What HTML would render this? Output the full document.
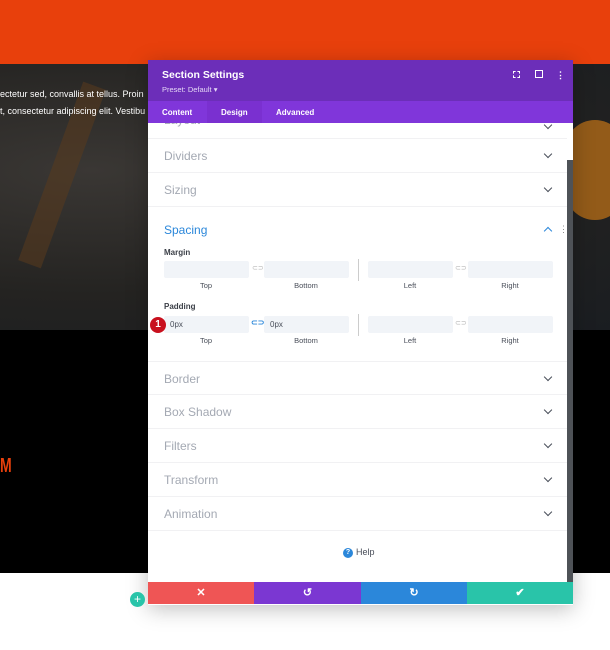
<!DOCTYPE html>
<html><head><style>
*{margin:0;padding:0;box-sizing:border-box}
body{width:610px;height:650px;overflow:hidden;position:relative;font-family:"Liberation Sans",sans-serif;background:#fff}
.abs{position:absolute}
.row{position:absolute;left:148px;width:419px;border-bottom:1px solid #f1f1f3}
.row span{position:absolute;left:16px;font-size:12px;color:#a4a9b3}
.chev{position:absolute;right:16px;width:6px;height:6px;border-right:1.6px solid #4a4f5a;border-bottom:1.6px solid #4a4f5a;transform:rotate(45deg)}
.inp{position:absolute;height:17px;background:#f1f4f8;border-radius:2px;font-size:8px;color:#4a4f5a;padding:4px 6px}
.lbl{position:absolute;font-size:7.5px;color:#4a4f5a;text-align:center;width:84px}
.sm{position:absolute;font-size:8px;color:#3b3f47;font-weight:bold}
.btn{position:absolute;top:582px;height:22px;color:#fff;font-size:11px;text-align:center;line-height:22px;font-weight:bold}
.top{z-index:5}
</style></head><body>
<div class="abs" style="left:0;top:0;width:610px;height:64px;background:#e8400c"></div>
<div class="abs" style="left:0;top:64px;width:610px;height:266px;background:radial-gradient(ellipse at 15% 40%,#3a3734,#242321 55%,#1a1d21);"></div>
<div class="abs" style="left:50px;top:80px;width:24px;height:190px;background:#5a3a1e;transform:rotate(20deg);opacity:.55"></div>
<div class="abs" style="left:565px;top:120px;width:60px;height:100px;background:#b06a18;border-radius:30px;opacity:.8"></div>
<div class="abs" style="left:0;top:330px;width:610px;height:243px;background:#000"></div>
<div class="abs" style="left:0;top:89px;font-size:9px;color:#fff">ectetur sed, convallis at tellus. Proin</div>
<div class="abs" style="left:0;top:106px;font-size:9px;color:#fff">t, consectetur adipiscing elit. Vestibu</div>
<div class="abs" style="left:0;top:455px;font-size:20px;color:#e8400c;font-weight:bold;transform:scaleX(.7);transform-origin:left">M</div>
<div class="abs" style="left:148px;top:60px;width:425px;height:545px;background:#fff;box-shadow:0 4px 20px rgba(0,0,0,.25)"></div>
<div class="abs top" style="left:148px;top:60px;width:425px;height:41px;background:#6c2eb9"></div>
<div class="abs top" style="left:162px;top:69px;font-size:10.5px;color:#fff;font-weight:bold">Section Settings</div>
<div class="abs top" style="left:162px;top:85px;font-size:7.5px;color:#e5d8f6">Preset: Default ▾</div>
<div class="abs top" style="left:513px;top:71px;width:7px;height:7px;border:1px dashed #fff"></div>
<div class="abs top" style="left:535px;top:70px;width:8px;height:8px;border:1.5px solid #fff"></div>
<div class="abs top" style="left:556px;top:70px;font-size:9px;color:#fff;font-weight:bold">⋮</div>
<div class="abs top" style="left:148px;top:101px;width:425px;height:22px;background:#8036da"></div>
<div class="abs top" style="left:207px;top:101px;width:55px;height:22px;background:#7a30d0"></div>
<div class="abs top" style="left:162px;top:108px;font-size:8px;color:#fff;font-weight:bold">Content</div>
<div class="abs top" style="left:221px;top:108px;font-size:8px;color:#fff;font-weight:bold">Design</div>
<div class="abs top" style="left:276px;top:108px;font-size:8px;color:#fff;font-weight:bold">Advanced</div>
<div class="abs" style="left:567px;top:160px;width:6px;height:422px;background:#4e5257"></div>
<div class="row" style="top:123px;height:16px"><span style="top:-10px">Layout</span><i class="chev" style="top:-1px"></i></div>
<div class="row" style="top:139px;height:34px"><span style="top:10px">Dividers</span><i class="chev" style="top:12px"></i></div>
<div class="row" style="top:173px;height:34px"><span style="top:10px">Sizing</span><i class="chev" style="top:12px"></i></div>
<div class="abs" style="left:164px;top:223px;font-size:12px;color:#2b87da">Spacing</div>
<div class="abs" style="left:545px;top:228px;width:6px;height:6px;border-left:1.6px solid #2b87da;border-top:1.6px solid #2b87da;transform:rotate(45deg)"></div>
<div class="abs" style="left:559px;top:224px;font-size:9px;color:#888">⋮</div>
<div class="sm" style="left:164px;top:248px">Margin</div>
<div class="inp" style="left:164px;top:261px;width:85px"></div>
<div class="inp" style="left:264px;top:261px;width:85px"></div>
<div class="inp" style="left:368px;top:261px;width:85px"></div>
<div class="inp" style="left:468px;top:261px;width:85px"></div>
<div class="abs" style="left:252px;top:264px;font-size:7px;color:#bbb">⊂⊃</div>
<div class="abs" style="left:455px;top:264px;font-size:7px;color:#bbb">⊂⊃</div>
<div class="abs" style="left:358px;top:259px;width:1px;height:22px;background:#ccc"></div>
<div class="lbl" style="left:164px;top:281px">Top</div><div class="lbl" style="left:264px;top:281px">Bottom</div>
<div class="lbl" style="left:368px;top:281px">Left</div><div class="lbl" style="left:468px;top:281px">Right</div>
<div class="sm" style="left:164px;top:302px">Padding</div>
<div class="inp" style="left:164px;top:316px;width:85px">0px</div>
<div class="inp" style="left:264px;top:316px;width:85px">0px</div>
<div class="inp" style="left:368px;top:316px;width:85px"></div>
<div class="inp" style="left:468px;top:316px;width:85px"></div>
<div class="abs" style="left:251px;top:318px;font-size:8px;color:#2b87da;font-weight:bold">⊂⊃</div>
<div class="abs" style="left:455px;top:319px;font-size:7px;color:#bbb">⊂⊃</div>
<div class="abs" style="left:358px;top:314px;width:1px;height:22px;background:#ccc"></div>
<div class="abs" style="left:150px;top:317px;width:16px;height:16px;border-radius:50%;background:#c8101e;color:#fff;font-size:10px;font-weight:bold;text-align:center;line-height:16px">1</div>
<div class="lbl" style="left:164px;top:336px">Top</div><div class="lbl" style="left:264px;top:336px">Bottom</div>
<div class="lbl" style="left:368px;top:336px">Left</div><div class="lbl" style="left:468px;top:336px">Right</div>
<div class="row" style="top:361px;height:34px;border-top:1px solid #f1f1f3"><span style="top:10px">Border</span><i class="chev" style="top:12px"></i></div>
<div class="row" style="top:395px;height:34px"><span style="top:10px">Box Shadow</span><i class="chev" style="top:12px"></i></div>
<div class="row" style="top:429px;height:34px"><span style="top:10px">Filters</span><i class="chev" style="top:12px"></i></div>
<div class="row" style="top:463px;height:34px"><span style="top:10px">Transform</span><i class="chev" style="top:12px"></i></div>
<div class="row" style="top:497px;height:34px"><span style="top:10px">Animation</span><i class="chev" style="top:12px"></i></div>
<div class="abs" style="left:343px;top:548px;width:10px;height:10px;border-radius:50%;background:#2b87da;color:#fff;font-size:7px;text-align:center;line-height:10px;font-weight:bold">?</div>
<div class="abs" style="left:356px;top:547px;font-size:9px;color:#4a4f5a">Help</div>
<div class="btn" style="left:148px;width:106px;background:#ef5555">✕</div>
<div class="btn" style="left:254px;width:107px;background:#7b37d2">↺</div>
<div class="btn" style="left:361px;width:106px;background:#2b87da">↻</div>
<div class="btn" style="left:467px;width:106px;background:#29c4a9">✔</div>
<div class="abs" style="left:130px;top:592px;width:15px;height:15px;border-radius:50%;background:#29c4a9;color:#fff;font-size:12px;text-align:center;line-height:15px">+</div>
</body></html>
